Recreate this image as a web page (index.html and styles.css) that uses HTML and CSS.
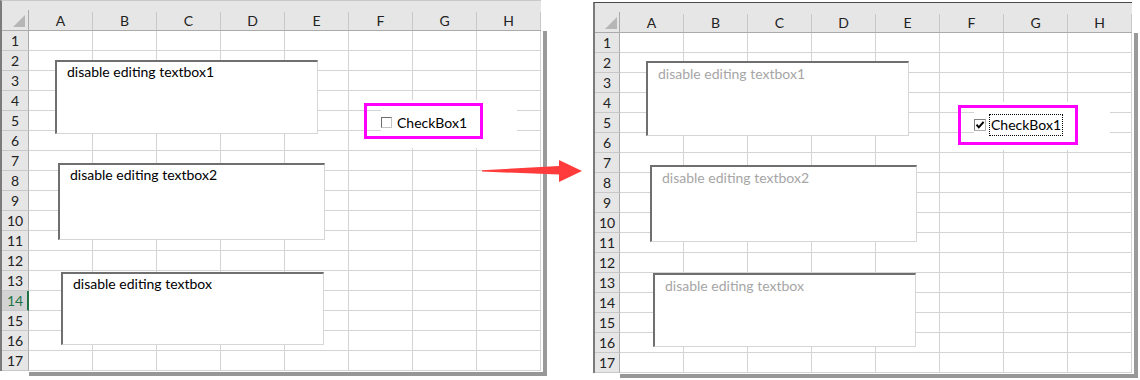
FILE: index.html
```html
<!DOCTYPE html>
<html lang="en">
<head>
    <meta charset="UTF-8">
    <title>Disable editing textboxes with a checkbox</title>
    <link rel="stylesheet" href="styles.css">
</head>
<body>
<div class="page">

    <!-- before: checkbox unchecked, textboxes editable -->
    <div class="sheet sheet-before">
        <div class="sheet-main">
            <div class="sheet-frame">
                <div class="sheet-top"></div>
                <div class="sheet-grid">
                    <div class="corner"></div>
                    <div class="col-heads">
                        <div>A</div><div>B</div><div>C</div><div>D</div><div>E</div><div>F</div><div>G</div><div>H</div>
                    </div>
                    <div class="row-heads">
                        <div>1</div><div>2</div><div>3</div><div>4</div><div>5</div><div>6</div>
                        <div>7</div><div>8</div><div>9</div><div>10</div><div>11</div><div>12</div>
                        <div>13</div><div class="active">14</div><div>15</div><div>16</div><div>17</div>
                    </div>
                    <div class="cells">
                        <div class="textbox tb1">disable editing textbox1</div>
                        <div class="textbox tb2">disable editing textbox2</div>
                        <div class="textbox tb3">disable editing textbox</div>
                        <div class="check">
                            <span class="box"></span>
                            <span class="caption">CheckBox1</span>
                        </div>
                        <div class="mark"></div>
                    </div>
                </div>
            </div>
            <div class="v-shadow"></div>
        </div>
        <div class="h-shadow"></div>
    </div>

    <!-- after: checkbox checked, textboxes disabled -->
    <div class="sheet sheet-after">
        <div class="sheet-main">
            <div class="sheet-frame">
                <div class="sheet-top"></div>
                <div class="sheet-grid">
                    <div class="corner"></div>
                    <div class="col-heads">
                        <div>A</div><div>B</div><div>C</div><div>D</div><div>E</div><div>F</div><div>G</div><div>H</div>
                    </div>
                    <div class="row-heads">
                        <div>1</div><div>2</div><div>3</div><div>4</div><div>5</div><div>6</div>
                        <div>7</div><div>8</div><div>9</div><div>10</div><div>11</div><div>12</div>
                        <div>13</div><div>14</div><div>15</div><div>16</div><div>17</div>
                    </div>
                    <div class="cells">
                        <div class="textbox tb1 disabled">disable editing textbox1</div>
                        <div class="textbox tb2 disabled">disable editing textbox2</div>
                        <div class="textbox tb3 disabled">disable editing textbox</div>
                        <div class="check checked">
                            <span class="box">
                                <svg viewBox="0 0 10 10" width="10" height="10"><path d="M1.5 4.6 L3.8 7.3 L8.6 1.8" fill="none" stroke="#000" stroke-width="2"/></svg>
                            </span>
                            <span class="caption">CheckBox1</span>
                        </div>
                        <div class="mark"></div>
                    </div>
                </div>
            </div>
            <div class="v-shadow"></div>
        </div>
        <div class="h-shadow"></div>
    </div>

    <svg class="arrow" viewBox="0 0 104 26" width="104" height="26">
        <polygon points="2,12.3 79,8 79,2 102,13 79,24 79,16.5 2,13.6" fill="#ff3b3b"/>
    </svg>
</div>
</body>
</html>
```

FILE: styles.css
```css
body {
    margin: 0;
    background-color: #fff;
    font-family: Lato, "Liberation Sans", sans-serif;
    font-size: 14px;
    color: #222;
}

.page {
    position: relative;
    display: flex;
    align-items: flex-start;
    width: 1140px;
    height: 380px;
    overflow: hidden;
}

/* one excel sheet */
.sheet {
    --head: 27px;
    display: flex;
    flex-direction: column;
}

.sheet-after {
    --head: 25px;
    margin-left: 46px;
    margin-top: 2px;
}

.sheet-main {
    display: flex;
}

.sheet-frame {
    border-left: 2px solid #7b7b7b;
    border-top: 1px solid #c9c9c9;
}

.sheet-after .sheet-frame {
    border-top-color: #4a4a4a;
}

.sheet-top {
    height: 9px;
    background-color: #e6e6e6;
}

.sheet-grid {
    display: grid;
    grid-template-columns: var(--head) 512px;
    grid-template-rows: 21px 340px;
}

.corner {
    position: relative;
    box-sizing: border-box;
    background-color: #e6e6e6;
    border-right: 1px solid #ababab;
    border-bottom: 1px solid #ababab;
}

.corner::after {
    content: "";
    position: absolute;
    right: 3px;
    bottom: 3px;
    width: 12px;
    height: 12px;
    background-color: #b6b6b6;
    clip-path: polygon(100% 0, 100% 100%, 0 100%);
}

.sheet-after .corner::after {
    right: 2px;
}

.col-heads {
    display: flex;
    box-sizing: border-box;
    padding-top: 2px;
    background-color: #e6e6e6;
    border-bottom: 1px solid #ababab;
}

.col-heads div {
    box-sizing: border-box;
    width: 64px;
    height: 18px;
    line-height: 18px;
    text-align: center;
    border-right: 1px solid #c8c8c8;
}

.row-heads {
    background-color: #e6e6e6;
}

.row-heads div {
    box-sizing: border-box;
    height: 20px;
    line-height: 19px;
    text-align: center;
    border-right: 1px solid #ababab;
    border-bottom: 1px solid #c8c8c8;
}

.row-heads .active {
    background-color: #d3d3d3;
    color: #217346;
    border-right: 2px solid #217346;
    padding-left: 1px;
}

.cells {
    position: relative;
    background-color: #fff;
    background-image:
        linear-gradient(to right, transparent 63px, #d4d4d4 63px),
        linear-gradient(to bottom, transparent 19px, #d4d4d4 19px);
    background-size: 64px 100%, 100% 20px;
}

.v-shadow {
    width: 4px;
    margin-left: 2px;
    margin-top: 31px;
    margin-bottom: -5px;
    background-color: #9a9a9a;
}

.h-shadow {
    width: 518px;
    height: 4px;
    margin-top: 1px;
    margin-left: calc(2px + var(--head));
    background-color: #979797;
}

/* textboxes sitting over the cells */
.textbox {
    position: absolute;
    box-sizing: border-box;
    padding: 1px 10px;
    line-height: 17px;
    color: #000;
    background-color: #fff;
    border-top: 2px solid #6f6f6f;
    border-left: 2px solid #6f6f6f;
    border-right: 1px solid #d6d6d6;
    border-bottom: 1px solid #d6d6d6;
}

.tb1 { left: 26px; top: 29px; width: 263px; height: 74px; }
.tb2 { left: 29px; top: 132px; width: 267px; height: 77px; }
.tb3 { left: 32px; top: 241px; width: 263px; height: 73px; }

.sheet-after .tb1 { top: 28px; height: 75px; }
.sheet-after .tb2 { left: 30px; }
.sheet-after .tb3 { left: 33px; top: 240px; height: 74px; }

.textbox.disabled {
    padding-top: 2px;
    color: #a6a6a6;
}

/* checkbox control */
.check {
    position: absolute;
    left: 352px;
    top: 69px;
    width: 136px;
    height: 48px;
    box-sizing: border-box;
    padding-top: 12px;
    display: flex;
    align-items: flex-start;
    background-color: #fff;
    color: #000;
}

.check .box {
    box-sizing: border-box;
    width: 11px;
    height: 11px;
    margin-top: 5px;
    margin-right: 3px;
    background-color: #fff;
    border: 1px solid;
    border-color: #6d6d6d #c4c4c4 #c4c4c4 #6d6d6d;
}

.check .caption {
    padding: 2px 1px;
    line-height: 16px;
    border: 1px dotted transparent;
}

.check.checked {
    left: 354px;
}

.check.checked .box {
    width: 12px;
    height: 12px;
    margin-top: 5px;
    border-color: #808080 #b0b0b0 #b0b0b0 #808080;
}

.check.checked .box svg {
    display: block;
}

.check.checked .caption {
    border-color: #000;
}

.mark {
    position: absolute;
    left: 335px;
    top: 72px;
    width: 119px;
    height: 36px;
    box-sizing: border-box;
    border: 3px solid #f0f;
}

.sheet-after .mark {
    left: 338px;
    width: 120px;
    height: 40px;
}

.arrow {
    position: absolute;
    left: 480px;
    top: 158px;
}
```
